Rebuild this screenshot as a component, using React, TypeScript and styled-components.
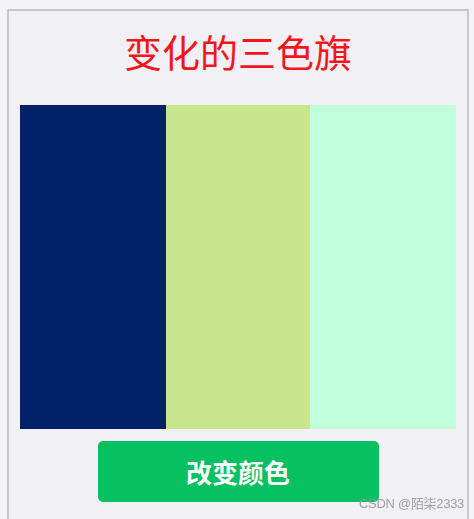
import { useState } from 'react';
import styled, { createGlobalStyle } from 'styled-components';

const palettes = [
  ['#022268', '#c8e68e', '#bfffdb'],
  ['#8e2a4b', '#f3d36b', '#6bc5f3'],
  ['#1d6b3a', '#f0f0f0', '#d8343a'],
];

const GlobalStyle = createGlobalStyle`
  body {
    margin: 0;
    background: #f4f3f8;
    font-family: "Noto Sans CJK SC", "Noto Sans", sans-serif;
  }
`;

export default function App() {
  const [index, setIndex] = useState(0);
  const colors = palettes[index];

  return (
    <>
      <GlobalStyle />
      <Panel>
        <Title>变化的三色旗</Title>
        <Flag>
          {colors.map((c, i) => (
            <Stripe key={i} $color={c} />
          ))}
        </Flag>
        <ChangeButton onClick={() => setIndex((index + 1) % palettes.length)}>
          改变颜色
        </ChangeButton>
      </Panel>
      <Watermark>CSDN @陌柒2333</Watermark>
    </>
  );
}

const Panel = styled.div`
  box-sizing: border-box;
  width: 462px;
  min-height: 540px;
  margin: 9px 0 0 7px;
  padding: 0 11px;
  border: 2px solid #c6c6cc;
  border-bottom: none;
  background: #f1f0f5;
  display: flex;
  flex-direction: column;
  align-items: center;
`;

const Title = styled.h1`
  margin: 16px 0 0;
  font-size: 38px;
  line-height: 48px;
  font-weight: 400;
  color: #f4161a;
`;

const Flag = styled.div`
  margin-top: 30px;
  width: 436px;
  height: 324px;
  display: grid;
  grid-template-columns: 146px 144px 146px;
`;

const Stripe = styled.div<{ $color: string }>`
  background: ${(p) => p.$color};
`;

const ChangeButton = styled.button`
  margin-top: 12px;
  width: 281px;
  height: 61px;
  border: none;
  border-radius: 5px;
  background: #07c160;
  color: #fff;
  font-family: "Noto Sans CJK SC", sans-serif;
  font-size: 26px;
  font-weight: 700;
  cursor: pointer;
`;

const Watermark = styled.span`
  position: fixed;
  right: 10px;
  bottom: 7px;
  font-family: "Liberation Sans", "Noto Sans CJK SC", sans-serif;
  font-size: 13px;
  line-height: 16px;
  letter-spacing: -0.3px;
  color: rgba(150, 150, 155, 0.9);
`;
